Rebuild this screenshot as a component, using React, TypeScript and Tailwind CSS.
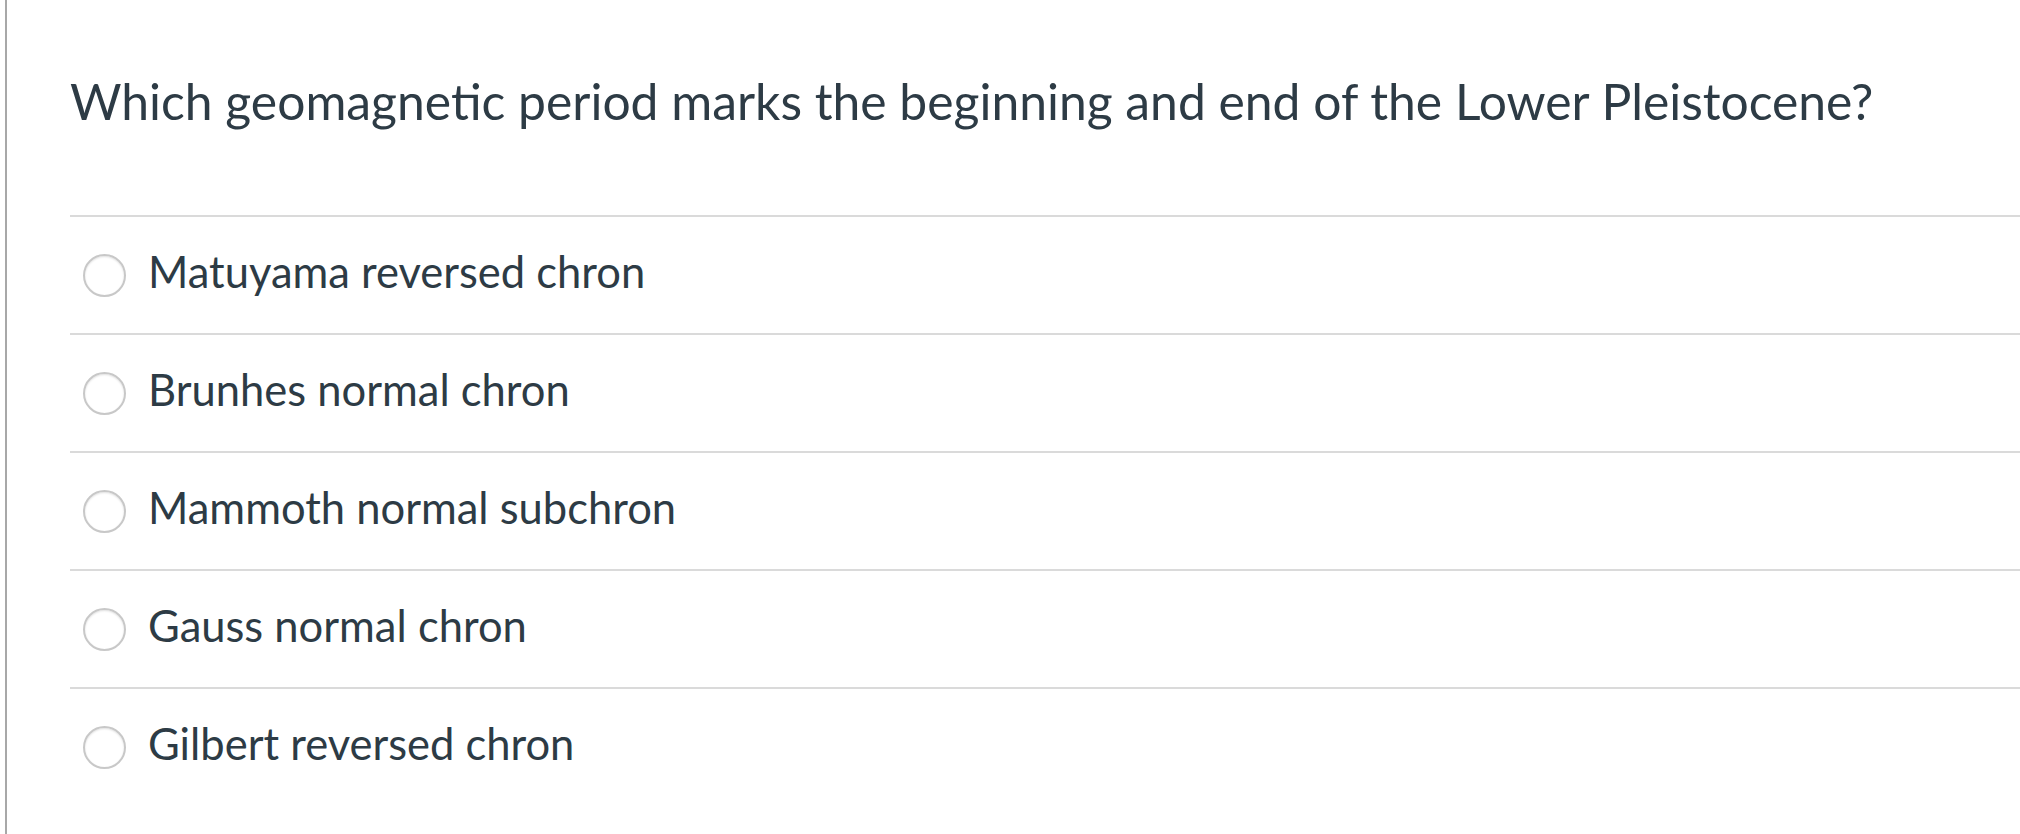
import React from "react";

const answers = [
  "Matuyama reversed chron",
  "Brunhes normal chron",
  "Mammoth normal subchron",
  "Gauss normal chron",
  "Gilbert reversed chron",
];

export default function App() {
  return (
    <div className="w-[2020px] h-[834px] bg-white overflow-hidden" style={{ fontFamily: "Lato, 'Noto Sans', sans-serif" }}>
      <div className="ml-[5px] h-full border-l-2 border-[#a8a8a8] pl-[63px]">
        <div className="pt-[72px] h-[215px] text-[49.8px] leading-[58px] text-[#2d3b45]">
          Which geomagnetic period marks the beginning and end of the Lower Pleistocene?
        </div>
        {answers.map((a) => (
          <div key={a} className="border-t-2 border-[#dadada] h-[118px] flex items-center">
            <span className="ml-[13px] w-[43px] h-[43px] rounded-full border-2 border-[#c8c8c8] bg-white shadow-[inset_0_1px_2px_rgba(0,0,0,0.12)] shrink-0" />
            <span className="ml-[22px] mb-[8px] text-[43.5px] text-[#2d3b45] leading-[54px]">{a}</span>
          </div>
        ))}
      </div>
    </div>
  );
}
